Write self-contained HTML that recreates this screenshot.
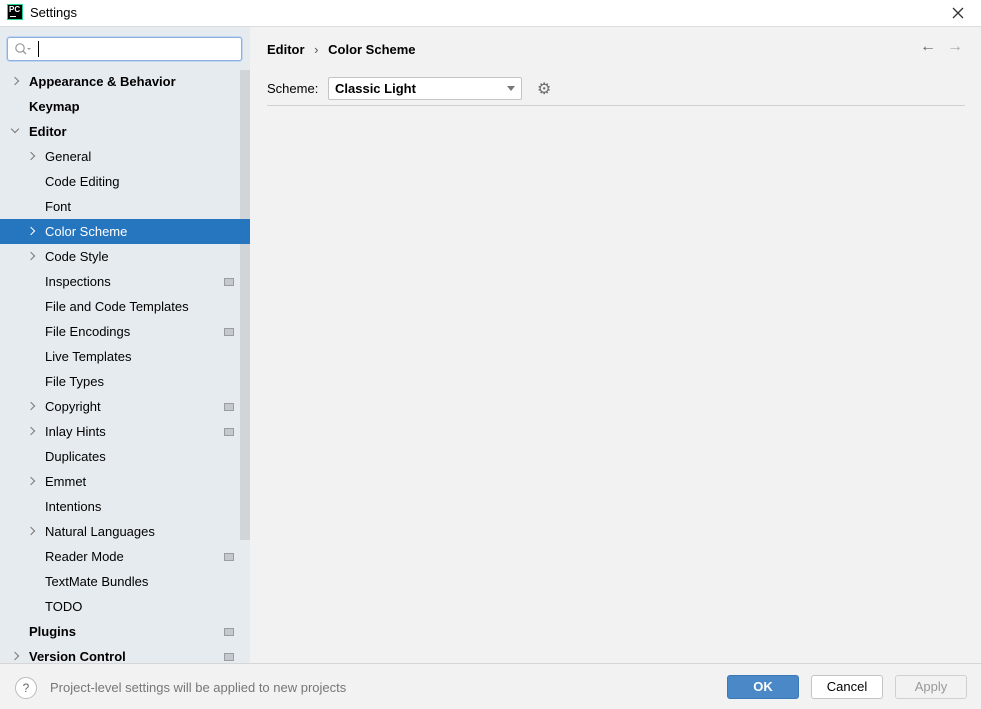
<html><head><style>
body{margin:0;width:981px;height:709px;position:relative;overflow:hidden;font-family:"Liberation Sans",sans-serif;font-size:13px;background:#f2f2f2;color:#000}
.title{position:absolute;left:0;top:0;width:981px;height:26px;background:#fff;border-bottom:1px solid #dcdcdc}
.side{position:absolute;left:0;top:27px;width:250px;height:636px;background:#e6ebf0}
.row{position:absolute;left:0;width:240px;height:25px;line-height:25px}
.row.sel{background:#2675bf;color:#fff;width:250px}
.b{font-weight:bold}
.chev{position:absolute;top:9px;width:5px;height:5px;border-right:1.2px solid #777;border-bottom:1.2px solid #777;transform:rotate(-45deg)}
.sel .chev{border-color:#fff}
.chev.d{transform:rotate(45deg);top:7px}
.ic{position:absolute;left:224px;top:9px;width:8px;height:6px;border:1px solid #9a9ea3;background:#c5c9ce}
.btn{position:absolute;top:675px;height:22px;line-height:22px;text-align:center;border-radius:3px;font-size:13px}
</style></head><body>
<div class="title">
<div style="position:absolute;left:7px;top:4px;width:16px;height:16px;background:#000;border:1px solid #21d789;box-sizing:border-box;color:#fff;font-size:8px;font-weight:bold;line-height:9px;padding-left:1px">PC<div style="position:absolute;left:2px;bottom:2px;width:6px;height:1px;background:#fff"></div></div>
<div style="position:absolute;left:30px;top:5px;font-size:13px">Settings</div>
<svg style="position:absolute;left:952px;top:7px" width="12" height="12"><path d="M1 1L11 11M11 1L1 11" stroke="#333" stroke-width="1.3"/></svg>
</div>
<div class="side">
<div style="position:absolute;left:7px;top:10px;width:233px;height:22px;background:#fff;border:1px solid #8cb0e0;border-radius:3px;box-shadow:0 0 0 1px #c3d6ef">
<svg style="position:absolute;left:6px;top:4px" width="18" height="14"><circle cx="6" cy="6" r="4.2" fill="none" stroke="#999" stroke-width="1.2"/><line x1="9" y1="9" x2="12" y2="12" stroke="#999" stroke-width="1.3"/><path d="M13 6h4l-2 2z" fill="#999"/></svg>
<div style="position:absolute;left:30px;top:3px;width:1px;height:16px;background:#000"></div></div>
<div style="position:absolute;left:240px;top:43px;width:10px;height:470px;background:#d2d5d8"></div>
</div>
<div id="tree" style="position:absolute;left:0;top:69px"></div>
<script>
var items=[["Appearance & Behavior",1,1,0,0],["Keymap",1,0,0,0],["Editor",1,2,0,0],["General",2,1,0,0],["Code Editing",2,0,0,0],["Font",2,0,0,0],["Color Scheme",2,1,0,1],["Code Style",2,1,0,0],["Inspections",2,0,1,0],["File and Code Templates",2,0,0,0],["File Encodings",2,0,1,0],["Live Templates",2,0,0,0],["File Types",2,0,0,0],["Copyright",2,1,1,0],["Inlay Hints",2,1,1,0],["Duplicates",2,0,0,0],["Emmet",2,1,0,0],["Intentions",2,0,0,0],["Natural Languages",2,1,0,0],["Reader Mode",2,0,1,0],["TextMate Bundles",2,0,0,0],["TODO",2,0,0,0],["Plugins",1,0,1,0],["Version Control",1,1,1,0]];
var h="";items.forEach(function(it,i){var x=it[1]==1?29:45;h+='<div class="row'+(it[4]?' sel':'')+'" style="top:'+(i*25)+'px">';
if(it[2])h+='<div class="chev'+(it[2]==2?' d':'')+'" style="left:'+(x-17)+'px"></div>';
h+='<span class="'+(it[1]==1?'b':'')+'" style="position:absolute;left:'+x+'px">'+it[0].replace("&","&amp;")+'</span>';
if(it[3])h+='<div class="ic"></div>';h+='</div>';});
document.getElementById('tree').innerHTML=h;
</script>
<div style="position:absolute;left:267px;top:42px;font-weight:bold">Editor <span style="font-weight:normal;color:#555;margin:0 6px">›</span> Color Scheme</div>
<div style="position:absolute;left:920px;top:38px;font-size:16px;color:#666">←</div>
<div style="position:absolute;left:947px;top:38px;font-size:16px;color:#aaa">→</div>
<div style="position:absolute;left:267px;top:81px">Scheme:</div>
<div style="position:absolute;left:328px;top:77px;width:192px;height:21px;background:#fff;border:1px solid #c4c4c4;border-radius:2px"><span style="position:absolute;left:6px;top:3px;font-weight:bold">Classic Light</span><div style="position:absolute;right:6px;top:8px;border:4px solid transparent;border-top:5px solid #777;border-bottom:0"></div></div>
<div style="position:absolute;left:537px;top:79px;font-size:16px;color:#6e6e6e">⚙</div>
<div style="position:absolute;left:267px;top:105px;width:698px;height:1px;background:#d0d0d0"></div>
<div style="position:absolute;left:0;top:663px;width:981px;height:1px;background:#d6d6d6"></div>
<div style="position:absolute;left:15px;top:677px;width:20px;height:20px;border:1px solid #bbb;border-radius:50%;background:#fff;text-align:center;line-height:20px;color:#666;font-size:12px">?</div>
<div style="position:absolute;left:50px;top:680px;color:#777">Project-level settings will be applied to new projects</div>
<div class="btn" style="left:727px;width:70px;background:#4a88c7;border:1px solid #3c78b5;color:#fff;font-weight:bold">OK</div>
<div class="btn" style="left:811px;width:70px;background:#fff;border:1px solid #c4c4c4">Cancel</div>
<div class="btn" style="left:895px;width:70px;background:#f2f2f2;border:1px solid #d0d0d0;color:#999">Apply</div>
</body></html>
